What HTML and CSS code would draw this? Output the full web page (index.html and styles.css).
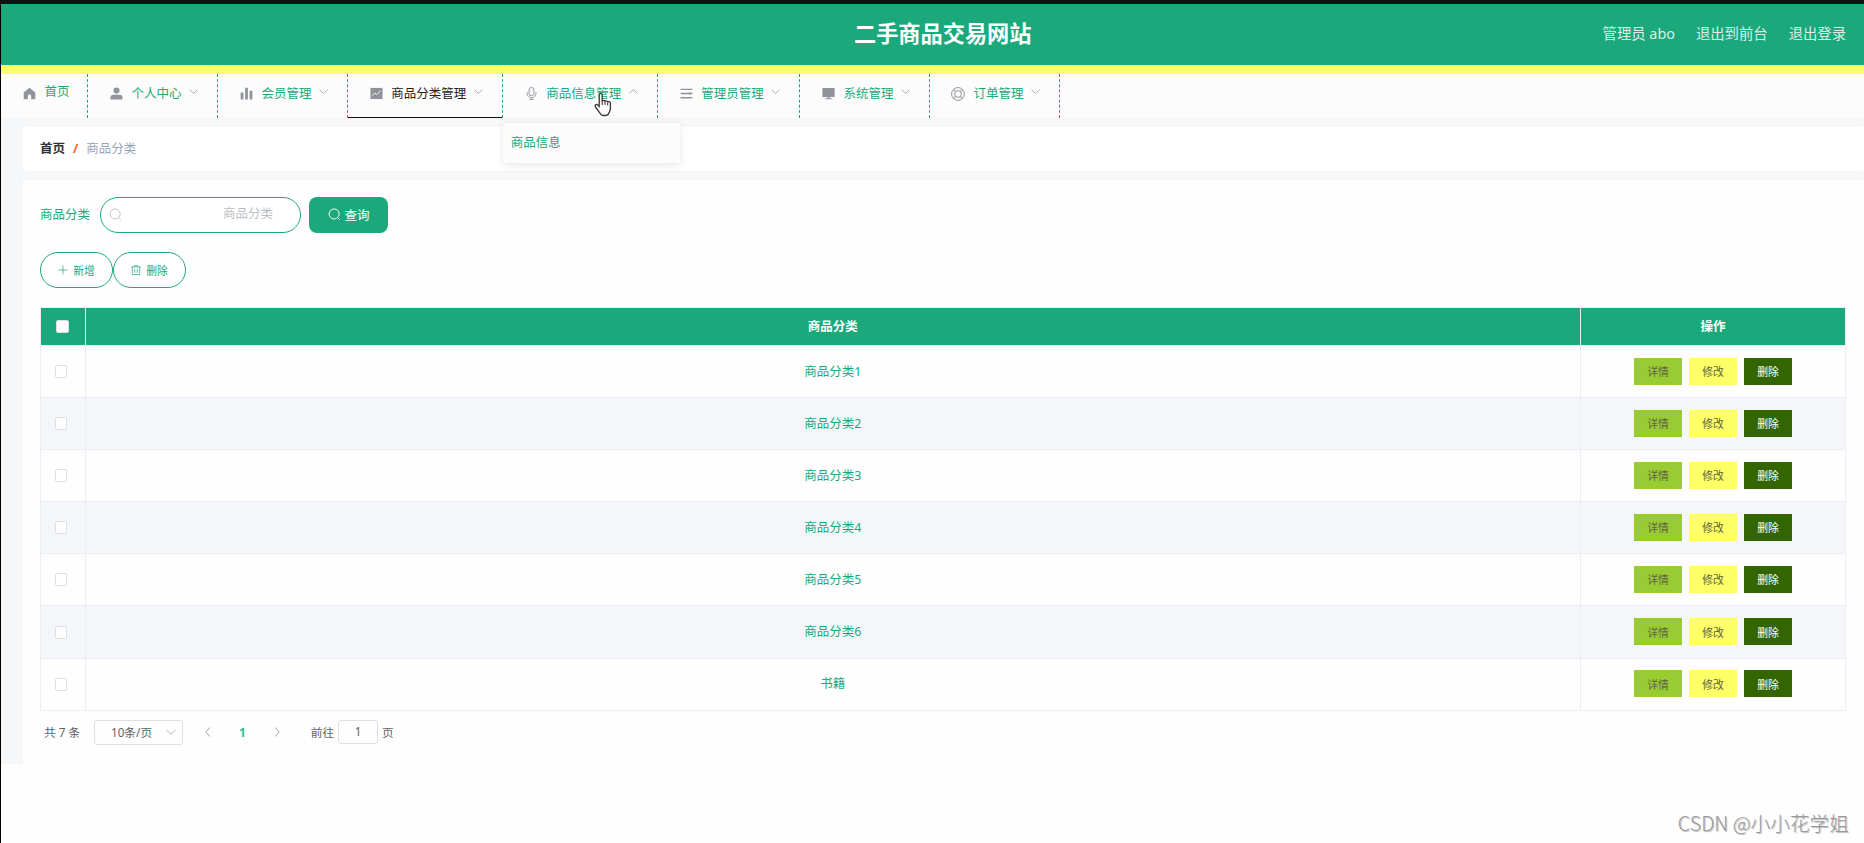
FILE: index.html
```html
<!DOCTYPE html>
<html lang="zh">

<head>
    <meta charset="UTF-8">
    <meta name="viewport" content="width=device-width, initial-scale=1.0">
    <title>二手商品交易网站</title>
    <link rel="stylesheet" href="styles.css">
</head>

<body>
    <!-- 图标定义 -->
    <svg class="icon-defs">
        <symbol id="arrow" viewBox="0 0 10 10">
            <path d="M.5 3L5 7.200 9.500 3" fill="none" stroke="currentColor" stroke-width="1" />
        </symbol>
        <symbol id="search" viewBox="0 0 14 14">
            <circle cx="6.6" cy="6.4" r="5.4" fill="none" stroke="currentColor" />
            <path d="M10.4 10.4l2.300 2.400" stroke="currentColor" />
        </symbol>
    </svg>

    <!-- 顶部 -->
    <header class="header">
        <h1 class="title">二手商品交易网站</h1>
        <div class="user-links">
            <span>管理员 abo</span>
            <span>退出到前台</span>
            <span>退出登录</span>
        </div>
    </header>

    <!-- 横向菜单 -->
    <nav class="menu">
        <div class="menu-item home">
            <svg class="menu-icon" viewBox="0 0 14 14"><path d="M7 .8L.8 6v7.2h4.4V9.6a1.8 1.8 0 013.6 0v3.6h4.4V6z" /></svg>
            <span>首页</span>
        </div>
        <div class="menu-item">
            <svg class="menu-icon" viewBox="0 0 14 14"><circle cx="7" cy="3.9" r="3.3" /><path d="M.6 13.4v-2c0-2 1-3 3-3h6.8c2 0 3 1 3 3v2z" /></svg>
            <span>个人中心</span>
            <svg class="arrow"><use href="#arrow" /></svg>
        </div>
        <div class="menu-item">
            <svg class="menu-icon" viewBox="0 0 14 14"><path d="M.7 6h3v7.4h-3zM5.5.8h3v12.6h-3zM10.3 4h3v9.4h-3z" /></svg>
            <span>会员管理</span>
            <svg class="arrow"><use href="#arrow" /></svg>
        </div>
        <div class="menu-item active">
            <svg class="menu-icon" viewBox="0 0 14 14"><path d="M.5 1h13v12H.5z" /><path d="M2.6 9.2l2.600-2.600 2 1.600 4-4" fill="none" stroke="#fcfcfc" stroke-width="1" /></svg>
            <span>商品分类管理</span>
            <svg class="arrow"><use href="#arrow" /></svg>
        </div>
        <div class="menu-item">
            <svg class="menu-icon line" viewBox="0 0 14 14"><rect x="4.300" y=".5" width="5.400" height="9" rx="2.700" /><path d="M2.200 5.500v1.800a4.800 4.300 0 009.600 0V5.500M7 11.600v2M4.800 13.500h4.400" /></svg>
            <span>商品信息管理</span>
            <svg class="arrow up"><use href="#arrow" /></svg>
            <div class="submenu">商品信息</div>
            <!-- 手形指针 -->
            <svg class="pointer" viewBox="0 0 18 24">
                <path d="M5.200 14V2.600c0-2.200 3-2.200 3 0v6.200c.2-1.500 2.600-1.300 2.800.4.3-1.300 2.500-1 2.700.6.400-1.100 2.700-.9 2.700.9v5.400c0 2.200-1 3.200-1.600 4.600-.6 1.500-1.800 2.300-3.800 2.300H9.400c-1.600 0-2.600-.8-3.300-2.200L1.400 14.300c-1-1.800.9-3.100 2.200-1.900z" fill="#fff" stroke="#333" stroke-width="1.300" />
                <path d="M8.200 8.500v4M11 9v3.500M13.700 10v3" stroke="#333" stroke-width="1" />
            </svg>
        </div>
        <div class="menu-item">
            <svg class="menu-icon line" viewBox="0 0 14 14"><path d="M.6 2.500h12.800M.6 7h12.800M.6 11.500h12.800" stroke-width="1.500" /><path d="M10 5l2.200 2L10 9z" fill="#909399" stroke="none" /></svg>
            <span>管理员管理</span>
            <svg class="arrow"><use href="#arrow" /></svg>
        </div>
        <div class="menu-item">
            <svg class="menu-icon" viewBox="0 0 14 14"><path d="M.4 1h13.200v9.800H.4zM6 10.800h2v1.400h2.500v1h-7v-1H6z" /></svg>
            <span>系统管理</span>
            <svg class="arrow"><use href="#arrow" /></svg>
        </div>
        <div class="menu-item">
            <svg class="menu-icon line ring" viewBox="0 0 14 14"><circle cx="7" cy="7" r="6.400" /><circle cx="7" cy="7" r="3.400" /><path d="M3.200 1.900l1.600 2.500M1.900 3.200l2.500 1.600M10.800 1.900L9.200 4.400M12.100 3.200L9.600 4.800M3.200 12.100l1.600-2.500M1.900 10.800l2.500-1.600M10.800 12.100L9.200 9.600M12.100 10.800L9.600 9.200" stroke-width=".6" /></svg>
            <span>订单管理</span>
            <svg class="arrow"><use href="#arrow" /></svg>
        </div>
    </nav>

    <main class="main">
        <div class="breadcrumb">
            <b>首页</b><i>/</i><span>商品分类</span>
        </div>

        <section class="content">
            <!-- 查询条件 -->
            <div class="search-row">
                <label>商品分类</label>
                <div class="search-input">
                    <svg><use href="#search" /></svg>
                    <span>商品分类</span>
                </div>
                <button class="search-btn"><svg><use href="#search" /></svg>查询</button>
            </div>

            <div class="action-row">
                <button class="action-btn">
                    <svg viewBox="0 0 10 10"><path d="M5 .5v9M.5 5h9" /></svg>新增
                </button>
                <button class="action-btn">
                    <svg viewBox="0 0 10 10"><path d="M.3 2h9.400M3.300 2V.5h3.400V2M1.300 2v7.500h7.400V2M3.800 4v3.700M6.200 4v3.700" /></svg>删除
                </button>
            </div>

            <!-- 数据表格 -->
            <table class="table">
                <thead>
                    <tr>
                        <th class="col-check"><span class="checkbox"></span></th>
                        <th>商品分类</th>
                        <th class="col-action">操作</th>
                    </tr>
                </thead>
                <tbody id="table-body"></tbody>
            </table>

            <!-- 分页 -->
            <div class="pagination">
                <span class="total">共 7 条</span>
                <div class="page-size">10条/页<svg><use href="#arrow" /></svg></div>
                <svg class="prev"><use href="#arrow" /></svg>
                <b>1</b>
                <svg class="next"><use href="#arrow" /></svg>
                <span>前往</span>
                <div class="page-input">1</div>
                <span>页</span>
            </div>
        </section>
    </main>

    <div class="watermark">CSDN @小小花学姐</div>

    <script>
        const list = ['商品分类1', '商品分类2', '商品分类3', '商品分类4', '商品分类5', '商品分类6', '书籍'];

        // 渲染表格
        document.getElementById('table-body').innerHTML = list.map(name => `
            <tr>
                <td><span class="checkbox"></span></td>
                <td>${name}</td>
                <td>
                    <div class="row-btns">
                        <button class="detail">详情</button>
                        <button class="edit">修改</button>
                        <button class="delete">删除</button>
                    </div>
                </td>
            </tr>`).join('');
    </script>
</body>

</html>
```

FILE: styles.css
```css
/* 页面基本样式 */
* {
    box-sizing: border-box;
}

body {
    margin: 0;
    height: 843px;
    overflow: hidden;
    border-top: 4px solid #111;
    border-left: 1px solid #000;
    background-color: #fefefe;
    color: #1ba97b;
    font-family: "Noto Sans", "Noto Sans CJK SC", sans-serif;
    font-size: 12.5px;
    line-height: 18px;
}

button {
    font-family: inherit;
    padding: 0;
}

svg {
    flex: none;
}

.icon-defs {
    display: none;
}

/* 顶部 */
.header {
    display: flex;
    align-items: center;
    height: 70px;
    padding: 0 18px 1px 853px;
    background-color: #1ba97b;
    border-bottom: 9px solid #ffff66;
    color: #fff;
}

.title {
    margin: 0;
    font-size: 22.2px;
    line-height: 30px;
}

.user-links {
    display: flex;
    gap: 21px;
    margin-left: auto;
    color: #dcefe6;
    font-size: 14.35px;
}

/* 菜单 */
.menu {
    display: flex;
    height: 44px;
    background-color: #fcfcfc;
}

.menu-item {
    position: relative;
    display: flex;
    align-items: center;
    padding: 0 18.9px 5px 22px;
    border-right: 1px dashed #1ba97b;
}

.menu-item.home {
    padding-right: 17.5px;
}

.menu-item.home span {
    margin-top: -4px;
}

.menu-item.active {
    color: #222;
    box-shadow: inset 0 -1px #111;
}

.menu-icon {
    width: 13px;
    height: 13px;
    margin: 0 8.5px 0 0;
    fill: #909399;
}

.menu-icon.line {
    fill: none;
    stroke: #909399;
}

.menu-icon.ring {
    width: 14px;
    height: 14px;
    margin: 0 8px 0 -0.5px;
}

.arrow {
    width: 9px;
    height: 9px;
    margin: -4px 0 0 7.5px;
    color: #a5a7ab;
}

.arrow.up {
    transform: rotate(180deg);
}

.submenu {
    position: absolute;
    left: 0;
    top: 49px;
    width: 177px;
    height: 40px;
    padding: 11px 8px;
    background-color: #fcfcfc;
    border-radius: 2px;
    box-shadow: 0 2px 10px rgba(0, 0, 0, 0.1);
}

.pointer {
    position: absolute;
    left: 91px;
    top: 18px;
    width: 18px;
    height: 25px;
}

/* 主体 */
.main {
    height: 646px;
    padding: 9px 0 0 22px;
    background-color: #f6f7f9;
}

.breadcrumb {
    display: flex;
    align-items: center;
    height: 44px;
    margin-bottom: 9px;
    padding: 0 17px 1px;
    background-color: #fff;
    border-radius: 3px;
}

.breadcrumb b {
    color: #303133;
}

.breadcrumb i {
    margin: 0 8px;
    color: #f0603a;
    font-style: normal;
    font-weight: bold;
}

.breadcrumb span {
    color: #97a4bb;
}

.content {
    height: 584px;
    padding: 17px 17px 0 17px;
    background-color: #fefefe;
}

.search-row {
    display: flex;
    align-items: center;
    height: 36px;
}

.search-input {
    display: flex;
    align-items: center;
    justify-content: space-between;
    width: 201px;
    height: 36px;
    margin: 0 8px 0 10px;
    padding: 0 27px 2px 8px;
    border: 1px solid #1ba97b;
    border-radius: 18px;
    background-color: #fff;
    color: #bcbfc6;
}

.search-input svg,
.search-btn svg {
    width: 13px;
    height: 13px;
}

.search-btn {
    display: flex;
    align-items: center;
    justify-content: center;
    gap: 4px;
    width: 79px;
    height: 36px;
    padding-bottom: 2px;
    border: none;
    border-radius: 8px;
    background-color: #1ba97b;
    color: #fff;
    font-size: 12.5px;
}

.action-row {
    display: flex;
    margin: 19px 0;
}

.action-btn {
    display: flex;
    align-items: center;
    justify-content: center;
    gap: 5px;
    width: 73px;
    height: 36px;
    padding-bottom: 1px;
    border: 1px solid #1ba97b;
    border-radius: 18px;
    background-color: #fff;
    color: #1ba97b;
    font-size: 10.8px;
}

.action-btn svg {
    width: 10px;
    height: 10px;
    fill: none;
    stroke: #1ba97b;
    stroke-width: 0.7;
}

/* 表格 */
.table {
    width: 1806px;
    table-layout: fixed;
    border-collapse: collapse;
    text-align: center;
}

.table th,
.table td {
    padding: 0;
    border: 1px solid #ebeef5;
}

.table th {
    height: 38px;
    background-color: #1ba97b;
    color: #fff;
}

.table td {
    height: 52.1px;
}

.table tbody tr:nth-child(even) {
    background-color: #f5f6fa;
}

.col-check {
    width: 44.5px;
}

.col-action {
    width: 265px;
}

.checkbox {
    display: block;
    width: 12px;
    height: 13px;
    margin: 0 auto 0 14px;
    border: 1px solid #dcdfe6;
    border-radius: 2px;
    background-color: #fff;
}

.table th .checkbox {
    width: 13px;
    margin-left: 15px;
}

.row-btns {
    display: flex;
    justify-content: center;
    gap: 7px;
    padding-bottom: 1px;
}

.row-btns button {
    width: 48px;
    height: 27px;
    border: none;
    color: #606246;
    font-size: 10.8px;
}

.row-btns .detail {
    background-color: #99cc33;
}

.row-btns .edit {
    background-color: #ffff66;
}

.row-btns .delete {
    background-color: #336600;
    color: #fff;
}

/* 分页 */
.pagination {
    display: flex;
    align-items: center;
    height: 25px;
    margin-top: 9px;
    padding-left: 4px;
    color: #606266;
    font-size: 11.7px;
}

.total {
    width: 50px;
}

.page-size {
    display: flex;
    align-items: center;
    width: 89px;
    height: 25px;
    padding: 0 6px 0 16px;
    border: 1px solid #dcdfe6;
    border-radius: 3px;
}

.page-size svg {
    width: 10px;
    height: 10px;
    margin-left: auto;
    color: #b5b9c2;
}

.prev,
.next {
    width: 10px;
    height: 10px;
    margin-left: 20px;
    color: #a0a4ac;
    transform: rotate(90deg);
}

.next {
    margin: 0 29px 0 26px;
    transform: rotate(-90deg);
}

.pagination b {
    margin-left: 26px;
    color: #1fc19a;
}

.page-input {
    width: 40px;
    height: 24px;
    margin: 0 4px;
    border: 1px solid #dcdfe6;
    border-radius: 3px;
    line-height: 21px;
    text-align: center;
}

/* 水印 */
.watermark {
    margin: 45px 15px 0 0;
    color: #999;
    font-family: "Noto Sans CJK SC", sans-serif;
    font-size: 19.7px;
    font-weight: 300;
    line-height: 28px;
    text-align: right;
    text-shadow: 1px 1px 1px #bbb;
}
```
